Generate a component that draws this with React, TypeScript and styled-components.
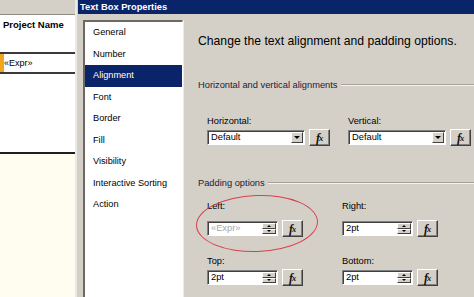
import styled, { createGlobalStyle } from 'styled-components';

const GlobalStyle = createGlobalStyle`
    html, body {
        margin: 0;
        padding: 0;
        background: #d4d0c8;
    }
    body {
        overflow: hidden;
    }
`;

const Page = styled.div`
    display: flex;
    width: 474px;
    height: 297px;
    overflow: hidden;
    background: #d4d0c8;
    font-family: "Liberation Sans", Arial, sans-serif;
    color: #000;
`;

// report designer strip on the left
const ReportPane = styled.div`
    width: 75px;
    flex: none;
    display: flex;
    flex-direction: column;
    border-right: 2px solid #ebe9e4;
    margin-right: 1px;
    background: #fff;
`;

const PaneTop = styled.div`
    height: 14px;
    background: #d4d0c8;
    border-bottom: 1px solid #8f8b84;
`;

const HeaderCell = styled.div`
    height: 33px;
    padding: 4px 0 0 3px;
    font-size: 9.5px;
    font-weight: bold;
    line-height: 11px;
    white-space: nowrap;
`;

const DataRow = styled.div`
    height: 18px;
    display: flex;
    align-items: center;
    border-top: 2px solid #3a3a3a;
    border-bottom: 2px solid #3a3a3a;
    font-size: 9px;
    &::before {
        content: '';
        width: 4px;
        height: 100%;
        background: #f2a51e;
    }
`;

const BlankArea = styled.div`
    height: 78px;
    border-bottom: 2px solid #1e1e1e;
`;

const FooterArea = styled.div`
    flex: 1;
    background: #fffdef;
`;

// dialog
const Dialog = styled.div`
    flex: 1;
    display: flex;
    flex-direction: column;
`;

const TitleBar = styled.div`
    height: 14px;
    padding-left: 2px;
    background: #0a246a;
    color: #fff;
    font-size: 9.3px;
    font-weight: bold;
    line-height: 14px;
`;

const DialogBody = styled.div`
    flex: 1;
    display: flex;
    padding: 6px 0 0 5px;
`;

const CategoryList = styled.div`
    width: 97px;
    flex: none;
    background: #fff;
    border-top: 2px solid #6c6964;
    border-left: 2px solid #6c6964;
    border-right: 1px solid #fff;
`;

const CategoryItem = styled.div<{ $active?: boolean }>`
    height: 21.5px;
    padding-left: 8px;
    font-size: 9.2px;
    line-height: 21.5px;
    background: ${p => (p.$active ? '#0a246a' : 'transparent')};
    color: ${p => (p.$active ? '#fff' : '#000')};
`;

const ContentPane = styled.div`
    flex: 1;
    padding: 14px 0 0 14px;
    border-left: 1px solid #ecebe7;
`;

const Intro = styled.div`
    font-size: 12.2px;
    line-height: 15px;
`;

const SectionHeading = styled.div<{ $top: number }>`
    display: flex;
    align-items: center;
    gap: 3px;
    margin-top: ${p => p.$top}px;
    font-size: 9.3px;
    line-height: 12px;
    color: #1a1a3a;
    &::after {
        content: '';
        flex: 1;
        border-top: 1px solid #a3a09a;
        border-bottom: 1px solid #f4f3f0;
    }
`;

const FieldGrid = styled.div<{ $cols: string; $top: number; $rowGap: number }>`
    display: grid;
    grid-template-columns: ${p => p.$cols};
    row-gap: ${p => p.$rowGap}px;
    margin: ${p => p.$top}px 0 0 9px;
`;

const FieldCell = styled.div`
    position: relative;
    display: flex;
    flex-direction: column;
`;

const FieldLabel = styled.div<{ $gap: number }>`
    font-size: 9.3px;
    line-height: 12px;
    margin-bottom: ${p => p.$gap}px;
`;

const FieldRow = styled.div`
    display: flex;
    align-items: center;
    gap: 4px;
`;

const SunkenBox = styled.div<{ $width: number }>`
    width: ${p => p.$width}px;
    height: 15px;
    box-sizing: border-box;
    display: flex;
    align-items: stretch;
    background: #fff;
    border-top: 1px solid #808080;
    border-left: 1px solid #808080;
    border-right: 1px solid #fff;
    border-bottom: 1px solid #fff;
    box-shadow: inset 1px 1px 0 #404040;
`;

const BoxText = styled.div<{ $muted?: boolean }>`
    flex: 1;
    padding-left: 3px;
    font-size: 9.3px;
    line-height: 13px;
    color: ${p => (p.$muted ? '#a7a7a7' : '#000')};
`;

const DropButton = styled.div`
    width: 12px;
    margin: 1px 1px 1px 0;
    box-sizing: border-box;
    display: flex;
    align-items: center;
    justify-content: center;
    background: #d4d0c8;
    border-top: 1px solid #fff;
    border-left: 1px solid #fff;
    border-right: 1px solid #404040;
    border-bottom: 1px solid #404040;
    &::after {
        content: '';
        border-left: 3px solid transparent;
        border-right: 3px solid transparent;
        border-top: 3px solid #000;
    }
`;

const SpinStack = styled.div`
    width: 14px;
    margin: 1px 1px 1px 0;
    display: flex;
    flex-direction: column;
`;

const SpinHalf = styled.div<{ $dir: 'up' | 'down' }>`
    flex: 1;
    box-sizing: border-box;
    display: flex;
    align-items: center;
    justify-content: center;
    background: #d4d0c8;
    border-top: 1px solid #fff;
    border-left: 1px solid #fff;
    border-right: 1px solid #404040;
    border-bottom: 1px solid #404040;
    &::after {
        content: '';
        border-left: 2px solid transparent;
        border-right: 2px solid transparent;
        ${p => (p.$dir === 'up' ? 'border-bottom: 2px solid #000;' : 'border-top: 2px solid #000;')}
    }
`;

const FxButton = styled.div`
    width: 21px;
    height: 17px;
    box-sizing: border-box;
    display: flex;
    align-items: center;
    justify-content: center;
    padding-top: 1px;
    background: #d4d0c8;
    border-top: 1px solid #fff;
    border-left: 1px solid #fff;
    border-right: 1px solid #404040;
    border-bottom: 1px solid #404040;
    box-shadow: inset -1px -1px 0 #808080;
    font-family: "Liberation Serif", "Times New Roman", serif;
    font-style: italic;
    font-weight: bold;
    font-size: 12px;
    line-height: 1;
    color: #111;
    sub {
        font-size: 8.5px;
        vertical-align: -1px;
        margin-left: -1px;
    }
`;

const CircleMark = styled.div`
    position: absolute;
    left: -11px;
    top: -5px;
    width: 120px;
    height: 55px;
    border: 1px solid #d8404e;
    border-radius: 50%;
    transform: rotate(-2deg);
    pointer-events: none;
`;

const categories = [
    'General',
    'Number',
    'Alignment',
    'Font',
    'Border',
    'Fill',
    'Visibility',
    'Interactive Sorting',
    'Action',
];

const Fx = () => <FxButton>f<sub>x</sub></FxButton>;

const ComboField = ({ label, value }: { label: string, value: string }) => (
    <FieldCell>
        <FieldLabel $gap={2}>{label}</FieldLabel>
        <FieldRow>
            <SunkenBox $width={98}>
                <BoxText>{value}</BoxText>
                <DropButton />
            </SunkenBox>
            <Fx />
        </FieldRow>
    </FieldCell>
);

const SpinField = ({ label, value, gap, muted, marked }: {
    label: string,
    value: string,
    gap: number,
    muted?: boolean,
    marked?: boolean,
}) => (
    <FieldCell>
        {marked && <CircleMark />}
        <FieldLabel $gap={gap}>{label}</FieldLabel>
        <FieldRow>
            <SunkenBox $width={71}>
                <BoxText $muted={muted}>{value}</BoxText>
                <SpinStack>
                    <SpinHalf $dir="up" />
                    <SpinHalf $dir="down" />
                </SpinStack>
            </SunkenBox>
            <Fx />
        </FieldRow>
    </FieldCell>
);

export default function App() {
    return <Page>
        <GlobalStyle />
        <ReportPane>
            <PaneTop />
            <HeaderCell>Project Name</HeaderCell>
            <DataRow>«Expr»</DataRow>
            <BlankArea />
            <FooterArea />
        </ReportPane>
        <Dialog>
            <TitleBar>Text Box Properties</TitleBar>
            <DialogBody>
                <CategoryList>
                    {categories.map(name => (
                        <CategoryItem key={name} $active={name === 'Alignment'}>{name}</CategoryItem>
                    ))}
                </CategoryList>
                <ContentPane>
                    <Intro>Change the text alignment and padding options.</Intro>
                    <SectionHeading $top={30}>Horizontal and vertical alignments</SectionHeading>
                    <FieldGrid $cols="141px 141px" $top={24} $rowGap={0}>
                        <ComboField label="Horizontal:" value="Default" />
                        <ComboField label="Vertical:" value="Default" />
                    </FieldGrid>
                    <SectionHeading $top={31}>Padding options</SectionHeading>
                    <FieldGrid $cols="135px 135px" $top={11} $rowGap={18}>
                        <SpinField label="Left:" value="«Expr»" gap={8} muted marked />
                        <SpinField label="Right:" value="2pt" gap={8} />
                        <SpinField label="Top:" value="2pt" gap={2} />
                        <SpinField label="Bottom:" value="2pt" gap={2} />
                    </FieldGrid>
                </ContentPane>
            </DialogBody>
        </Dialog>
    </Page>;
}
